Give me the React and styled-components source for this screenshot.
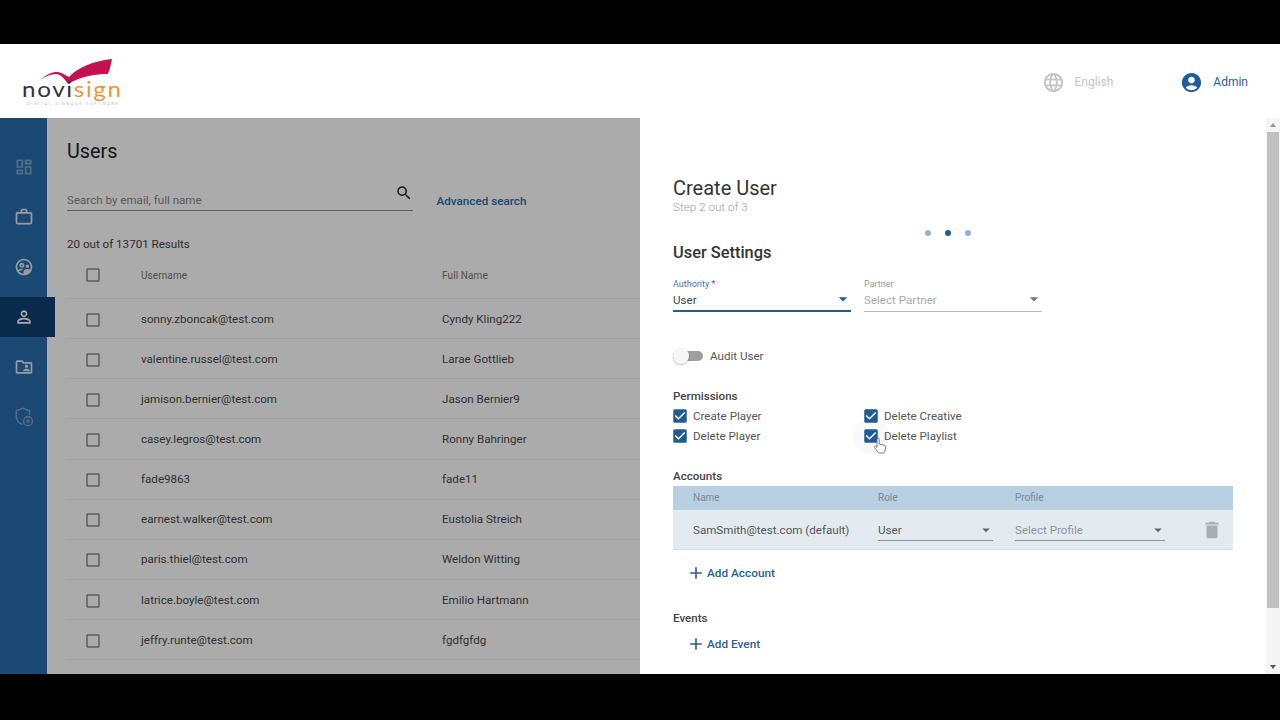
import React from 'react'
import styled, { createGlobalStyle } from 'styled-components'
import {
  MdOutlineDashboard, MdOutlineWorkOutline, MdOutlineSupervisedUserCircle, MdPersonOutline,
  MdOutlineFolderShared, MdLanguage, MdAccountCircle, MdSearch, MdDelete, MdAdd,
  MdArrowDropDown, MdCheckBox, MdCheckBoxOutlineBlank,
} from 'react-icons/md'

const GlobalStyle = createGlobalStyle`
  html, body { margin: 0; padding: 0; background: #000; overflow: hidden; }
  body { font-family: Roboto, "Liberation Sans", sans-serif; font-size: 11.6px; color: #333; }
  * { box-sizing: border-box; }
`

const Page = styled.div`
  width: 1280px; height: 720px;
  display: flex; flex-direction: column;
  background: #000;
`
const Header = styled.header`
  margin-top: 44px;
  height: 74px;
  background: #fff;
  display: flex; align-items: center;
  padding: 0 32px 0 22px;
`
const LogoBox = styled.div`
  position: relative;
  width: 100px; height: 50px;
  margin-top: 2px;
`
const LogoMark = styled.svg`
  position: absolute; left: 0; top: 0;
`
const LogoText = styled.div`
  position: absolute; left: 0; top: 20px;
  font-family: Lato, sans-serif; font-size: 20.5px; font-weight: 400; line-height: 24px;
  letter-spacing: 1.4px;
  color: #333;
  white-space: nowrap;
  transform: scaleX(1.18);
  transform-origin: left center;
  span { color: #e8973a; }
`
const LogoTag = styled.div`
  position: absolute; left: 5px; top: 44px;
  font-size: 4px; line-height: 5px; letter-spacing: 1.6px; color: #bbb;
  white-space: nowrap;
`
const HeaderRight = styled.div`
  margin-left: auto; margin-top: 2px;
  display: flex; align-items: center;
`
const HeaderItem = styled.div`
  display: flex; align-items: center; gap: ${p => p.$gap}px;
  margin-left: ${p => p.$left || 0}px;
  color: ${p => p.$color};
  font-size: 12px;
`
const Main = styled.main`
  height: 556px;
  display: flex;
  position: relative;
`
const LeftPane = styled.section`
  position: relative;
  width: 640px;
  display: flex;
  background: #fff;
  overflow: hidden;
`
const Scrim = styled.div`
  position: absolute; inset: 0;
  background: rgba(0,0,0,.33);
  z-index: 3;
`
const Sidebar = styled.nav`
  width: 47px; flex: none;
  background: #296eae;
  padding-top: 29px;
  display: flex; flex-direction: column; gap: 10px;
  position: relative; z-index: 2;
`
const NavItem = styled.div`
  width: ${p => p.$active ? 55 : 47}px;
  height: 40px; flex: none;
  display: flex; align-items: center;
  padding-left: 13.5px;
  background: ${p => p.$active ? '#0f3f70' : 'transparent'};
  color: ${p => p.$active ? '#fff' : p.$dim ? '#7ea6cc' : '#e0e9f2'};
`
const Content = styled.div`
  flex: 1; min-width: 0;
  padding: 22px 0 0 20px;
`
const PageTitle = styled.h1`
  margin: 0; font-size: 19.8px; font-weight: 400; line-height: 24px; color: #222;
`
const SearchRow = styled.div`
  display: flex; align-items: flex-end;
  margin-top: 18px;
`
const SearchBox = styled.div`
  width: 346px; height: 29px;
  border-bottom: 1px solid #8b8b8b;
  display: flex; align-items: flex-end; justify-content: space-between;
  padding-bottom: 3px;
  color: #888;
  svg { color: #222; margin: 0 0 5px; }
`
const SearchHint = styled.span`
  line-height: 14px;
`
const AdvancedLink = styled.a`
  margin-left: 23.5px; margin-bottom: 3px;
  color: #2a6cab; font-size: 11.7px; font-weight: 500; line-height: 14px;
`
const Results = styled.div`
  margin-top: 26px; line-height: 14px; color: #444;
`
const Row = styled.div`
  display: grid;
  grid-template-columns: 74px 301px 1fr;
  align-items: center;
  height: ${p => p.$head ? 47 : 40.15}px;
  margin-top: ${p => p.$head ? 1 : 0}px;
  border-bottom: 1px solid #f2f2f2;
  font-size: ${p => p.$head ? 10 : 11.6}px;
  color: ${p => p.$head ? '#777' : '#4a4a4a'};
  letter-spacing: ${p => p.$head ? '.1px' : '0'};
`
const CheckCell = styled.div`
  display: flex; padding-left: 17px; color: #8a8a8a;
  transform: translateY(${p => p.$nudge || 0}px);
`
const Drawer = styled.aside`
  width: 640px;
  background: #fff;
  display: flex;
  position: relative;
`
const DrawerBody = styled.div`
  flex: 1; min-width: 0;
  padding: 59px 33px 0 33px;
  overflow: hidden;
`
const DrawerTitle = styled.h2`
  margin: 0; font-size: 20px; font-weight: 400; line-height: 23px; color: #333;
`
const StepText = styled.div`
  font-size: 11.7px; line-height: 14px; color: #999; font-weight: 300;
`
const Dots = styled.div`
  display: flex; gap: 14px; justify-content: center;
  margin-top: 16px;
  padding-right: 10px;
`
const Dot = styled.span`
  width: 6px; height: 6px; border-radius: 50%;
  background: ${p => p.$on ? '#1f5c92' : '#95b3d0'};
`
const SectionTitle = styled.h3`
  margin: 7px 0 0; font-size: 16.4px; font-weight: 500; line-height: 19px; color: #333;
`
const FieldRow = styled.div`
  display: flex; gap: 13px; margin-top: 17px;
`
const Field = styled.div`
  width: 178px; height: 33px;
  position: relative;
  border-bottom: ${p => p.$active ? '2px solid #1f5c92' : '1px solid #bbb'};
`
const FieldLabel = styled.div`
  font-size: 9px; line-height: 11px; color: ${p => p.$active ? '#3f77ab' : '#999'};
  b { color: #d23; font-weight: 400; }
`
const FieldValue = styled.div`
  line-height: 14px; margin-top: 3px;
  color: ${p => p.$ph ? '#aaa' : '#444'};
`
const Caret = styled.span`
  position: absolute; right: -2px; top: 10px;
  display: flex;
  color: ${p => p.$active ? '#1f5c92' : '#777'};
`
const SwitchRow = styled.div`
  display: flex; align-items: center; gap: 7px;
  margin-top: 34px; height: 20px;
  color: #555;
`
const SwitchTrack = styled.span`
  width: 30px; height: 10px; border-radius: 5px;
  background: #9e9e9e; position: relative; display: block;
`
const SwitchKnob = styled.span`
  position: absolute; left: 0; top: -3px;
  width: 16px; height: 16px; border-radius: 50%;
  background: #f7f7f7;
  box-shadow: 0 1px 2px rgba(0,0,0,.25);
`
const Label = styled.div`
  font-weight: 500; line-height: 14px; color: #444;
  margin-top: ${p => p.$top}px;
`
const PermGrid = styled.div`
  display: grid; grid-template-columns: 191px 1fr; grid-auto-rows: 20px;
  margin-top: 3px;
  width: 400px;
`
const Perm = styled.label`
  display: flex; align-items: center; gap: 4px;
  color: #555;
  margin-left: -2px;
  position: relative;
  svg { color: #1f5c92; flex: none; position: relative; }
`
const Ripple = styled.span`
  position: absolute; left: -9px; top: -8px;
  width: 36px; height: 36px; border-radius: 50%;
  background: rgba(31,92,146,.035);
`
const PointerCursor = styled.svg`
  position: absolute; left: 233px; top: 319px; z-index: 5;
`
const AccountHead = styled.div`
  display: grid; grid-template-columns: 185px 137px 1fr;
  height: 24px; align-items: center;
  margin-top: 3px;
  padding: 0 0 2px 20px;
  background: #b9cfe2;
  font-size: 10px; color: #7a8a99;
`
const AccountRow = styled.div`
  display: grid; grid-template-columns: 185px 137px 1fr;
  height: 40px; align-items: center;
  padding-left: 20px;
  background: #e3ebf1;
  border-bottom: 1px solid #d5dfe7;
  color: #555;
  position: relative;
`
const RowSelect = styled.div`
  width: ${p => p.$w}px; height: 21px;
  margin-top: 2px;
  border-bottom: 1px solid #8a949c;
  display: flex; align-items: center; justify-content: space-between;
  color: ${p => p.$ph ? '#8d959b' : '#555'};
  padding-bottom: 1px;
  svg { color: #666; margin-right: -2px; }
`
const Trash = styled.span`
  position: absolute; right: 10px; top: 9px; display: flex; color: #a8afb4;
`
const AddLink = styled.a`
  display: flex; align-items: center; gap: 1px;
  margin-top: ${p => p.$top}px; margin-left: 13px;
  color: #2b6196; font-size: 11.8px; font-weight: 500; line-height: 20px;
`
const Scrollbar = styled.div`
  width: 14px; flex: none;
  background: #f5f5f5;
  display: flex; flex-direction: column; align-items: center;
`
const ScrollArrow = styled.span`
  width: 0; height: 0; flex: none;
  border-left: 3px solid transparent; border-right: 3px solid transparent;
  ${p => p.$down ? 'border-top: 4px solid #555; margin: auto 0 5px;' : 'border-bottom: 4px solid #999; margin: 5px 0;'}
`
const ScrollThumb = styled.div`
  width: 12px; height: 476px; background: #c1c1c1; flex: none;
`

const users = [
  ['sonny.zboncak@test.com', 'Cyndy Kling222'],
  ['valentine.russel@test.com', 'Larae Gottlieb'],
  ['jamison.bernier@test.com', 'Jason Bernier9'],
  ['casey.legros@test.com', 'Ronny Bahringer'],
  ['fade9863', 'fade11'],
  ['earnest.walker@test.com', 'Eustolia Streich'],
  ['paris.thiel@test.com', 'Weldon Witting'],
  ['latrice.boyle@test.com', 'Emilio Hartmann'],
  ['jeffry.runte@test.com', 'fgdfgfdg'],
]

const ShieldIcon = () => (
  <svg width="20" height="20" viewBox="0 0 18 18" fill="none" stroke="currentColor" strokeWidth="1.2">
    <path d="M14 7V3.4L8 1 2 3.4v4.4c0 3.7 2.5 6.7 5.8 7.9" />
    <circle cx="12.6" cy="12.8" r="4" />
    <circle cx="12.6" cy="12.8" r="1" />
  </svg>
)

const Logo = () => (
  <LogoBox>
    <LogoMark width="100" height="30" viewBox="0 0 100 30">
      <path d="M18 23 C25 17 31 14.500 36 15 C40 15.500 43 18 47 20 C55 11 70 4 90 2 C89 7 88 12 86 17 C74 17 60 19 46 27 C42 21 38 17 34 17 C29 17 24 19 18 23 Z" fill="#c2124f" />
    </LogoMark>
    <LogoText>novi<span>sign</span></LogoText>
    <LogoTag>DIGITAL SIGNAGE SOFTWARE</LogoTag>
  </LogoBox>
)

export default function App() {
  return (
    <Page>
      <GlobalStyle />
      <Header>
        <Logo />
        <HeaderRight>
          <HeaderItem $gap={10} $color="#c4c4c4">
            <MdLanguage size={23} />
            English
          </HeaderItem>
          <HeaderItem $gap={10} $left={67} $color="#1f5c99">
            <MdAccountCircle size={23} />
            Admin
          </HeaderItem>
        </HeaderRight>
      </Header>
      <Main>
        <LeftPane>
          <Sidebar>
            <NavItem $dim><MdOutlineDashboard size={20} /></NavItem>
            <NavItem><MdOutlineWorkOutline size={20} /></NavItem>
            <NavItem><MdOutlineSupervisedUserCircle size={20} /></NavItem>
            <NavItem $active><MdPersonOutline size={20} /></NavItem>
            <NavItem><MdOutlineFolderShared size={20} /></NavItem>
            <NavItem $dim><ShieldIcon /></NavItem>
          </Sidebar>
          <Content>
            <PageTitle>Users</PageTitle>
            <SearchRow>
              <SearchBox>
                <SearchHint>Search by email, full name</SearchHint>
                <MdSearch size={18} />
              </SearchBox>
              <AdvancedLink>Advanced search</AdvancedLink>
            </SearchRow>
            <Results>20 out of 13701 Results</Results>
            <Row $head>
              <CheckCell><MdCheckBoxOutlineBlank size={18} /></CheckCell>
              <div>Username</div>
              <div>Full Name</div>
            </Row>
            {users.map(u => (
              <Row key={u[0]}>
                <CheckCell $nudge={1}><MdCheckBoxOutlineBlank size={18} /></CheckCell>
                <div>{u[0]}</div>
                <div>{u[1]}</div>
              </Row>
            ))}
          </Content>
          <Scrim />
        </LeftPane>
        <Drawer>
          <DrawerBody>
            <DrawerTitle>Create User</DrawerTitle>
            <StepText>Step 2 out of 3</StepText>
            <Dots><Dot /><Dot $on /><Dot /></Dots>
            <SectionTitle>User Settings</SectionTitle>
            <FieldRow>
              <Field $active>
                <FieldLabel $active>Authority <b>*</b></FieldLabel>
                <FieldValue>User</FieldValue>
                <Caret $active><MdArrowDropDown size={20} /></Caret>
              </Field>
              <Field>
                <FieldLabel>Partner</FieldLabel>
                <FieldValue $ph>Select Partner</FieldValue>
                <Caret><MdArrowDropDown size={20} /></Caret>
              </Field>
            </FieldRow>
            <SwitchRow>
              <SwitchTrack><SwitchKnob /></SwitchTrack>
              Audit User
            </SwitchRow>
            <Label $top={23}>Permissions</Label>
            <PermGrid>
              <Perm><MdCheckBox size={18} />Create Player</Perm>
              <Perm><MdCheckBox size={18} />Delete Creative</Perm>
              <Perm><MdCheckBox size={18} />Delete Player</Perm>
              <Perm><Ripple /><MdCheckBox size={18} />Delete Playlist</Perm>
            </PermGrid>
            <Label $top={23}>Accounts</Label>
            <AccountHead>
              <div>Name</div>
              <div>Role</div>
              <div>Profile</div>
            </AccountHead>
            <AccountRow>
              <div>SamSmith@test.com (default)</div>
              <RowSelect $w={115}>User<MdArrowDropDown size={18} /></RowSelect>
              <RowSelect $w={150} $ph>Select Profile<MdArrowDropDown size={18} /></RowSelect>
              <Trash><MdDelete size={22} /></Trash>
            </AccountRow>
            <AddLink $top={13}><MdAdd size={20} />Add Account</AddLink>
            <Label $top={28}>Events</Label>
            <AddLink $top={9}><MdAdd size={20} />Add Event</AddLink>
          </DrawerBody>
          <Scrollbar>
            <ScrollArrow />
            <ScrollThumb />
            <ScrollArrow $down />
          </Scrollbar>
          <PointerCursor width="14" height="18" viewBox="0 0 14 18">
            <path d="M4 8V2.200a1.100 1.100 0 0 1 2.200 0V7l5 1.200c.9.2 1.400 1 1.300 1.900l-.6 4.400c-.1.8-.8 1.500-1.700 1.500H6.600c-.6 0-1.100-.3-1.400-.8L1.500 10.600c-.5-.8.500-1.800 1.300-1.200L4 10.400Z" fill="#fff" stroke="#666" strokeWidth="0.9" />
          </PointerCursor>
        </Drawer>
      </Main>
    </Page>
  )
}
